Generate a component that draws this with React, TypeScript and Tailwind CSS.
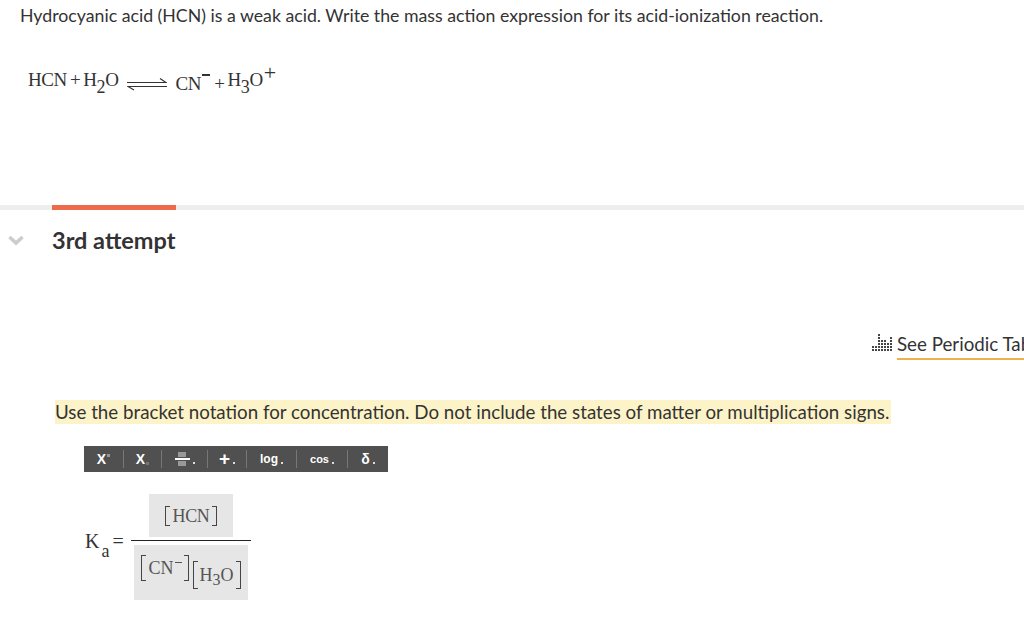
const mathFont = "font-['Liberation_Serif',serif]";

function Sub({ children }: { children: string }) {
  return <span className="text-[18px] align-[-7px] leading-none">{children}</span>;
}

function PeriodicIcon() {
  const cols = [2, 2, 6, 4, 4, 3, 5];
  return (
    <svg width="20" height="18" viewBox="0 0 20 18" className="shrink-0 mb-[4px]">
      {cols.map((h, i) =>
        Array.from({ length: h }).map((_, j) => (
          <rect key={`${i}-${j}`} x={i * 3} y={16 - j * 3} width="2" height="2" fill="#444" />
        ))
      )}
    </svg>
  );
}

function ToolButton({ label, className, dot }: { label: React.ReactNode; className: string; dot?: boolean }) {
  return (
    <div className={`flex items-center justify-center text-white font-bold font-['Liberation_Sans',sans-serif] border-r border-[#777] h-[18px] last:border-r-0 ${className}`}>
      {label}
      {dot && <span className="ml-[3px] mt-[8px] w-[2px] h-[2px] bg-[#ddd]" />}
    </div>
  );
}

function Bracket({ side, className }: { side: 'left' | 'right'; className: string }) {
  return (
    <span className={`inline-block w-[5px] border-y border-[#444] ${side === 'left' ? 'border-l' : 'border-r'} ${className}`} />
  );
}

export default function App() {
  return (
    <div className="w-[1024px] h-[624px] bg-white overflow-hidden font-['Lato',sans-serif] text-[#333]">
      <p className="pl-5 pt-[5px] text-[17.73px] leading-[22px] whitespace-nowrap">
        Hydrocyanic acid (HCN) is a weak acid. Write the mass action expression for its acid-ionization reaction.
      </p>

      {/* reaction */}
      <div className={`${mathFont} ml-7 mt-[36px] h-[40px] flex items-center text-[19px] text-[#333] whitespace-nowrap leading-none`}>
        <span className="tracking-[-0.4px]">
          HCN<span className="mx-[3px]">+</span>H<Sub>2</Sub>O
        </span>
        <svg width="40" height="14" viewBox="0 0 40 14" className="ml-[8px] mr-[9px] mt-[1px] shrink-0">
          <path d="M0 5.5H39L33 1.5" fill="none" stroke="#333" strokeWidth="1.2" />
          <path d="M40 9.5H1L7 13" fill="none" stroke="#333" strokeWidth="1.2" />
        </svg>
        <span className="flex items-center tracking-[-0.4px]">
          CN
          <span className="w-[8px] h-[1.5px] bg-[#333] mb-[16px] mx-px" />
          <span className="mx-[3px]">+</span>
          <span>H<Sub>3</Sub>O</span>
          <span className="text-[22px] leading-none mb-[20px] ml-px">+</span>
        </span>
      </div>

      {/* progress divider */}
      <div className="mt-[102px] h-[5px] bg-[#eeeeee]">
        <div className="ml-[52px] w-[124px] h-[5px] bg-[#ee6a4b]" />
      </div>

      <div className="flex items-center h-[47px] mt-[7px]">
        <svg width="16" height="11" viewBox="0 0 16 11" className="ml-2 mr-7">
          <path d="M1.5 2L8 8L14.5 2" fill="none" stroke="#cccccc" strokeWidth="3.5" />
        </svg>
        <h2 className="text-[23.5px] font-bold text-[#333] whitespace-nowrap">3rd attempt</h2>
      </div>

      {/* periodic table link */}
      <div className="ml-[872px] mt-[65px] flex items-center gap-[5px] h-[30px] whitespace-nowrap">
        <PeriodicIcon />
        <span className="text-[18.74px] leading-[32px] border-b-2 border-[#eeb04c] h-[30px] box-content">See Periodic Table</span>
      </div>

      <div className="ml-[55px] mt-[41px] h-[24px] w-[836px] bg-[#fdf3c8] text-[18.74px] leading-[24px] whitespace-nowrap">
        Use the bracket notation for concentration. Do not include the states of matter or multiplication signs.
      </div>

      {/* toolbar */}
      <div className="ml-[84px] mt-[22px] w-[304px] h-[26px] bg-[#505050] flex items-center">
        <ToolButton
          className="w-[40px] text-[14px]"
          label={
            <span className="flex items-center">
              X<span className="w-[3px] h-[3px] bg-[#999] ml-px mb-[8px]" />
            </span>
          }
        />
        <ToolButton
          className="w-[38px] text-[14px]"
          label={
            <span className="flex items-center">
              X<span className="w-[3px] h-[3px] bg-[#777] ml-px mt-[9px]" />
            </span>
          }
        />
        <ToolButton
          className="w-[46px]"
          dot
          label={
            <span className="flex flex-col items-center w-[15px] gap-[1px]">
              <span className="w-[8px] h-[5px] bg-[#999]" />
              <span className="w-[15px] h-[2px] bg-white" />
              <span className="w-[8px] h-[5px] bg-[#999]" />
            </span>
          }
        />
        <ToolButton className="w-[39px] text-[19px]" dot label="+" />
        <ToolButton className="w-[50px] text-[12px]" dot label="log" />
        <ToolButton className="w-[51px] text-[11px]" dot label="cos" />
        <ToolButton className="w-[40px] text-[14px]" dot label="δ" />
      </div>

      {/* answer */}
      <div className={`${mathFont} ml-[85px] mt-[22px] flex items-center text-[20px] text-[#333] leading-none`}>
        <div className="w-[46px] h-[34px] mt-[2px] whitespace-nowrap">
          K<span className="text-[18px] align-[-9px] ml-[2px]">a</span>
          <span className="ml-[3px]">=</span>
        </div>
        <div className="w-[120px] flex flex-col items-center">
          <div className="w-[84px] h-[43px] bg-[#e6e6e6] flex items-center justify-center gap-[3px] text-[#555] text-[18px]">
            <Bracket side="left" className="h-[20px]" />
            <span className="tracking-[-0.4px]">HCN</span>
            <Bracket side="right" className="h-[20px]" />
          </div>
          <div className="w-full h-px bg-[#222] mt-[3px] mb-[4px]" />
          <div className="w-[114px] h-[55px] bg-[#e6e6e6] flex items-center justify-center text-[#555] text-[18px] whitespace-nowrap">
            <span className="flex items-center mb-[9px]">
              <Bracket side="left" className="h-[26px] mr-[2px]" />
              CN
              <span className="w-[7px] h-px bg-[#555] mb-[12px] ml-px" />
              <Bracket side="right" className="h-[26px] ml-[2px]" />
            </span>
            <span className="flex items-center mt-[4px] ml-[4px]">
              <Bracket side="left" className="h-[28px] mr-[2px]" />
              H<span className="text-[16px] mt-[11px]">3</span>O
              <Bracket side="right" className="h-[28px] ml-[2px]" />
            </span>
          </div>
        </div>
      </div>
    </div>
  );
}
